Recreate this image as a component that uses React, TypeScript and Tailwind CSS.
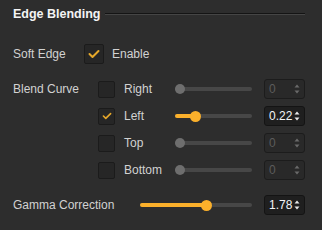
import React from "react";

const font = { fontFamily: '"Liberation Sans", Arial, sans-serif' };

function Check({ checked, size }: { checked: boolean; size: "lg" | "sm" }) {
  const cls =
    size === "lg"
      ? "w-[20px] h-[20px] rounded-[2px]"
      : "w-[17px] h-[17px] rounded-[2px]";
  return (
    <div className={`${cls} shrink-0 bg-[#262626] border border-[#1b1b1b] flex items-center justify-center`}>
      {checked && (
        <svg width={size === "lg" ? 12 : 10} height={size === "lg" ? 10 : 8} viewBox="0 0 12 10">
          <path d="M1.5 5 L4.5 8 L10.5 2" fill="none" stroke="#e6a82a" strokeWidth="2" strokeLinecap="round" strokeLinejoin="round" />
        </svg>
      )}
    </div>
  );
}

function Slider({ width, value, active }: { width: number; value: number; active: boolean }) {
  const thumb = active ? 11 : 10;
  const pos = (width - thumb) * value;
  return (
    <div className="relative h-[20px] shrink-0" style={{ width }}>
      <div className="absolute left-0 right-0 top-[8px] h-[4px] rounded-full bg-[#474747]" />
      {active && (
        <div
          className="absolute left-0 top-[8px] h-[4px] rounded-full bg-[#fbb02b]"
          style={{ width: pos + thumb / 2 }}
        />
      )}
      <div
        className={`absolute rounded-full ${active ? "bg-[#fbb02b] top-[4.5px]" : "bg-[#6e6e6e] top-[5px]"}`}
        style={{ left: pos, width: thumb, height: thumb }}
      />
    </div>
  );
}

function Spin({ value, active }: { value: string; active: boolean }) {
  const arrow = active ? "#e8e8e8" : "#6a6a6a";
  return (
    <div
      className={`w-[41px] h-[20px] shrink-0 rounded-[3px] border flex items-center justify-between pl-[4px] pr-[4px] ${
        active ? "bg-[#1f1f1f] border-[#141414] text-[#f2f4f8]" : "bg-[#292929] border-[#1c1c1c] text-[#5c5c5c]"
      }`}
    >
      <span className="text-[12px] leading-none">{value}</span>
      <svg width="6" height="12" viewBox="0 0 6 12">
        <path d="M3 1.5 L5.5 4.5 L0.5 4.5 Z" fill={arrow} />
        <path d="M3 10.5 L5.5 7.5 L0.5 7.5 Z" fill={arrow} />
      </svg>
    </div>
  );
}

const rows = [
  { label: "Right", checked: false, value: 0, text: "0" },
  { label: "Left", checked: true, value: 0.22, text: "0.22" },
  { label: "Top", checked: false, value: 0, text: "0" },
  { label: "Bottom", checked: false, value: 0, text: "0" },
];

export default function App() {
  return (
    <div className="w-[322px] h-[230px] bg-[#2d2d2d] pl-[13px] pr-[17px] pt-[4px] text-[12px] text-[#d2d2d2] overflow-hidden" style={font}>
      <div className="flex items-center h-[20px]">
        <span className="text-[12.5px] font-bold text-[#f4f4f4] leading-none">Edge Blending</span>
        <div className="flex-1 ml-[4px] flex flex-col">
          <div className="h-[1px] bg-[#141414]" />
          <div className="h-[1px] bg-[#454545]" />
        </div>
      </div>

      <div className="flex items-center h-[20px] mt-[20px]">
        <span className="w-[71px]">Soft Edge</span>
        <Check checked size="lg" />
        <span className="ml-[8px]">Enable</span>
      </div>

      <div className="flex mt-[15px]">
        <div className="w-[85px] h-[20px] flex items-center">Blend Curve</div>
        <div className="flex flex-col gap-[7px]">
          {rows.map((r) => (
            <div key={r.label} className="flex items-center h-[20px]">
              <Check checked={r.checked} size="sm" />
              <span className="ml-[9px] w-[51px]">{r.label}</span>
              <Slider width={77} value={r.value} active={r.checked} />
              <div className="ml-[12px]">
                <Spin value={r.text} active={r.checked} />
              </div>
            </div>
          ))}
        </div>
      </div>

      <div className="flex items-center h-[20px] mt-[15px]">
        <span className="w-[127px]">Gamma Correction</span>
        <Slider width={112} value={0.6} active />
        <div className="ml-[12px]">
          <Spin value="1.78" active />
        </div>
      </div>
    </div>
  );
}
